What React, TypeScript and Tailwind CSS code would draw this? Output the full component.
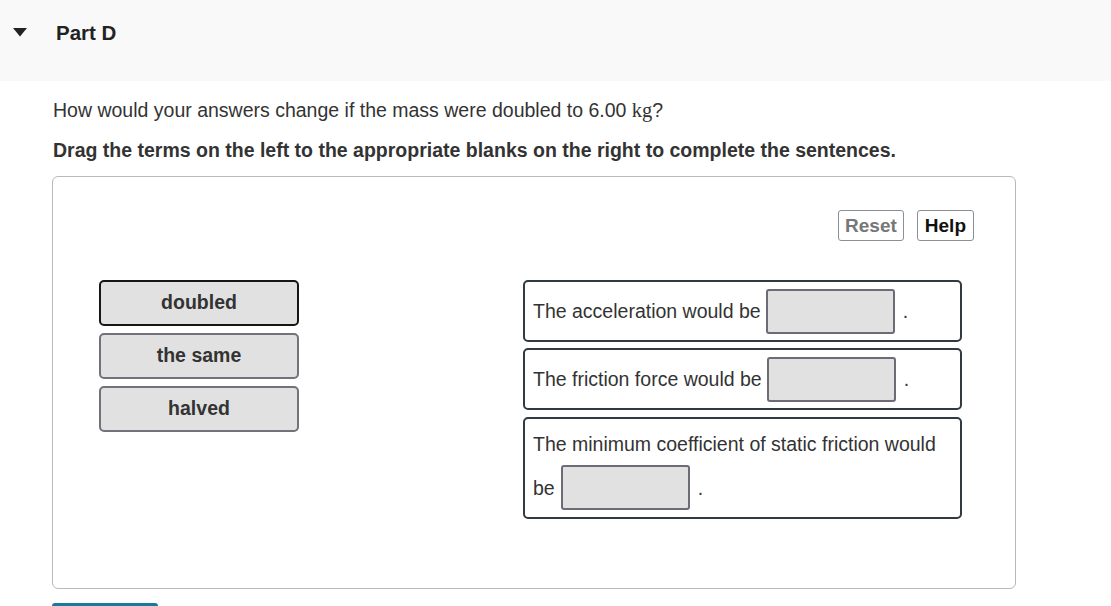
const terms = ['doubled', 'the same', 'halved']

function Blank() {
  return <span className="inline-block h-[45px] w-[129px] shrink-0 rounded-[3px] border-2 border-[#6c6c76] bg-[#e1e1e1]" />
}

export default function App() {
  return (
    <div className="min-h-[606px] w-[1111px] overflow-hidden bg-white font-['Liberation_Sans',Arial,sans-serif] text-[#333]">
      <div className="h-[81px] bg-[#f9f9f9] pt-[21px]">
        <div className="flex h-[23px] items-center">
          <svg className="ml-[13px]" width="14" height="9" viewBox="0 0 14 9">
            <path d="M0 0 L14 0 L7 8.5 Z" fill="#222" />
          </svg>
          <span className="ml-[29px] text-[20.5px] font-bold leading-[23px] text-[#222]">Part D</span>
        </div>
      </div>

      <p className="ml-[53px] mt-[18px] text-[19.5px] leading-[22px]">
        How would your answers change if the mass were doubled to 6.00{' '}
        <span className="font-['Liberation_Serif','DejaVu_Serif',serif] text-[20.5px]">kg</span>?
      </p>
      <p className="ml-[53px] mt-[18px] text-[19.5px] font-bold leading-[22px]">
        Drag the terms on the left to the appropriate blanks on the right to complete the sentences.
      </p>

      <div className="ml-[52px] mt-[15px] h-[413px] w-[964px] rounded-[6px] border border-[#b9b9b9]">
        <div className="flex justify-end gap-[13px] pr-[41px] pt-[33px]">
          <button className="h-[31px] rounded-[3px] border border-[#8a9096] px-[6px] text-[19px] font-bold leading-[22px] text-[#777]">
            Reset
          </button>
          <button className="h-[31px] rounded-[3px] border border-[#8a9096] px-[7px] text-[19px] font-bold leading-[22px] text-[#111]">
            Help
          </button>
        </div>

        <div className="mt-[39px] flex pl-[46px]">
          <div className="flex w-[200px] flex-col gap-[7px]">
            {terms.map((t, i) => (
              <div
                key={t}
                className={
                  'flex h-[46px] items-center justify-center rounded-[5px] border-2 bg-[#e1e1e1] text-[19.5px] font-bold leading-[22px] ' +
                  (i === 0 ? 'border-[#161616]' : 'border-[#72727c]')
                }
              >
                <span className="-mt-[2px]">{t}</span>
              </div>
            ))}
          </div>

          <div className="ml-[224px] flex w-[439px] flex-col gap-[6px] text-[19.5px] leading-[22px]">
            <div className="flex h-[62px] items-center rounded-[5px] border-2 border-[#313a41] px-[8px]">
              <span>The acceleration would be</span>
              <span className="ml-[5px] flex"><Blank /></span>
              <span className="ml-[8px]">.</span>
            </div>
            <div className="flex h-[62px] items-center rounded-[5px] border-2 border-[#313a41] px-[8px]">
              <span>The friction force would be</span>
              <span className="ml-[5px] flex"><Blank /></span>
              <span className="ml-[8px]">.</span>
            </div>
            <div className="mt-[1px] h-[102px] rounded-[5px] border-2 border-[#313a41] px-[8px] pt-[5px]">
              <div className="flex h-[40px] items-center">The minimum coefficient of static friction would</div>
              <div className="mt-[1px] flex items-center">
                <span>be</span>
                <span className="ml-[6px] flex"><Blank /></span>
                <span className="ml-[8px]">.</span>
              </div>
            </div>
          </div>
        </div>
      </div>

      <div className="ml-[52px] mt-[14px] h-[6px] w-[106px] rounded-t-[3px] bg-[#167a9d]" />
    </div>
  )
}
